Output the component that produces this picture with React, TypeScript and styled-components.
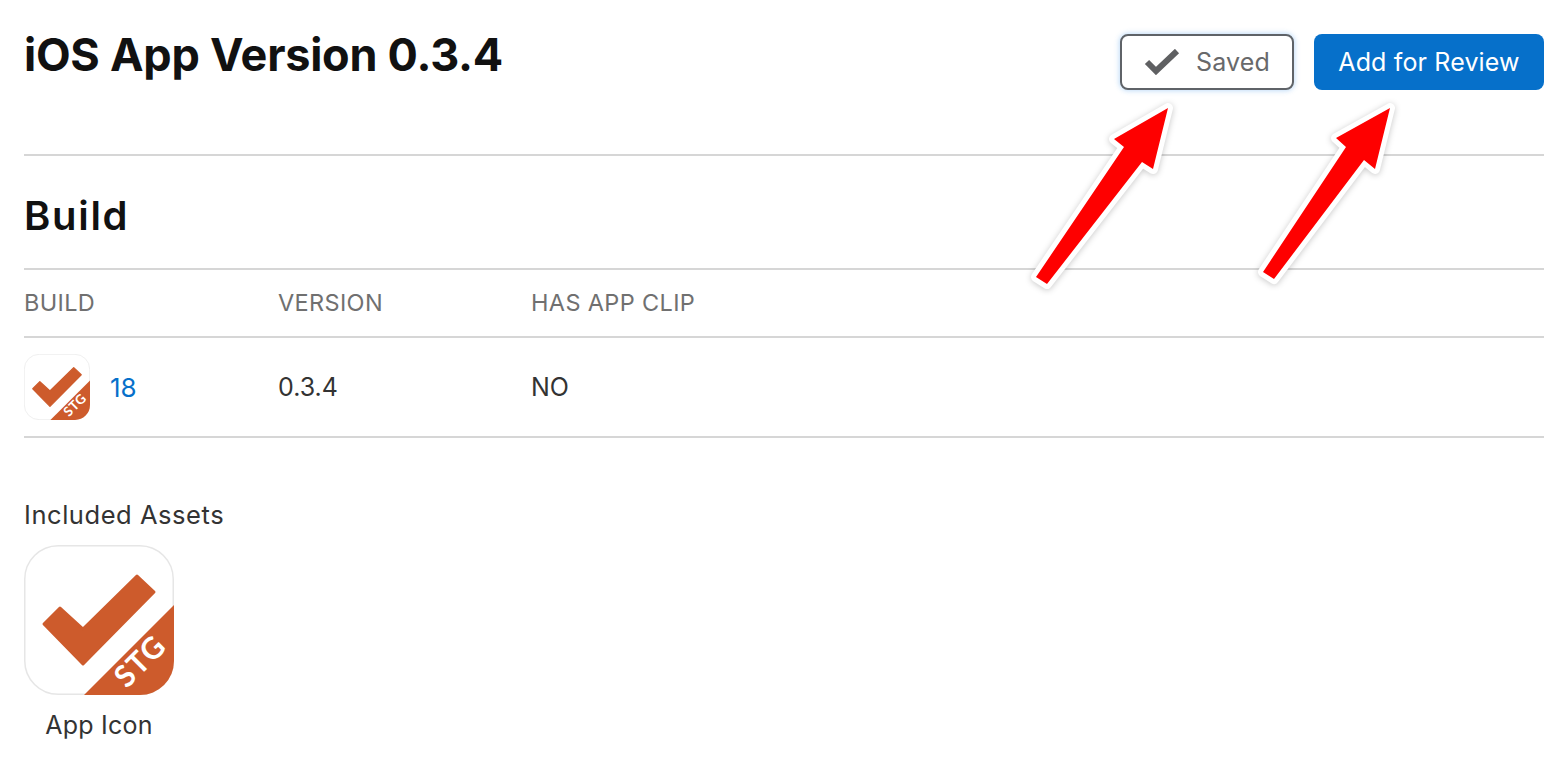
import React from "react";
import styled, { createGlobalStyle } from "styled-components";

const GlobalStyle = createGlobalStyle`
  html, body {
    margin: 0;
    padding: 0;
    background: #fff;
  }
  body {
    font-family: Inter, "Liberation Sans", sans-serif;
    color: #333;
  }
`;

const Page = styled.div`
  position: relative;
  width: 1564px;
  height: 770px;
  padding: 0 20px 0 24px;
  box-sizing: border-box;
  overflow: hidden;
`;

const Header = styled.header`
  display: flex;
  justify-content: space-between;
  align-items: flex-start;
  height: 120px;
  padding-top: 34px;
  border-bottom: 2px solid #d6d6d6;
`;

const Title = styled.h1`
  margin: -4px 0 0;
  font-size: 45px;
  line-height: 50px;
  font-weight: 650;
  letter-spacing: -0.25px;
  color: #111;
`;

const Actions = styled.div`
  display: flex;
  gap: 20px;
`;

const Button = styled.button<{ $primary?: boolean }>`
  display: flex;
  align-items: center;
  justify-content: center;
  height: 56px;
  width: ${(p) => (p.$primary ? "230px" : "174px")};
  gap: 16px;
  padding: 0;
  box-sizing: border-box;
  border-radius: 8px;
  font-family: inherit;
  font-size: 25px;
  letter-spacing: 0.15px;
  border: ${(p) => (p.$primary ? "none" : "2px solid #5f6368")};
  background: ${(p) => (p.$primary ? "#0670ca" : "#fff")};
  color: ${(p) => (p.$primary ? "#fff" : "#68696b")};
  box-shadow: ${(p) => (p.$primary ? "none" : "0 0 5px 1px rgba(120, 180, 240, 0.45)")};
`;

const SectionTitle = styled.h2`
  display: flex;
  align-items: center;
  height: 106px;
  margin: 0;
  padding-top: 6px;
  font-size: 40px;
  font-weight: 600;
  letter-spacing: 1.7px;
  color: #111;
  border-bottom: 2px solid #d6d6d6;
`;

const Row = styled.div<{ $height: number }>`
  display: grid;
  grid-template-columns: 254px 253px 1fr;
  align-items: center;
  height: ${(p) => p.$height}px;
  border-bottom: 2px solid #d6d6d6;
`;

const HeadCell = styled.div`
  margin-top: -1px;
  font-size: 23.5px;
  letter-spacing: 0.35px;
  color: #707070;
  text-transform: uppercase;
`;

const Cell = styled.div`
  display: flex;
  align-items: center;
  gap: 20px;
  font-size: 25px;
  color: #333;
`;

const BuildLink = styled.a`
  font-size: 26px;
  color: #0670ca;
  text-decoration: none;
`;

const AssetsLabel = styled.div`
  margin-top: 60px;
  font-size: 25.5px;
  line-height: 34px;
  letter-spacing: 0.55px;
  color: #333;
`;

const Asset = styled.figure`
  display: flex;
  flex-direction: column;
  align-items: center;
  gap: 13px;
  width: 150px;
  margin: 13px 0 0;
`;

const AssetCaption = styled.figcaption`
  font-size: 25px;
  line-height: 34px;
  letter-spacing: 0.25px;
  color: #333;
  white-space: nowrap;
`;

const Overlay = styled.svg`
  position: absolute;
  inset: 0;
  pointer-events: none;
  filter: drop-shadow(0 1px 3px rgba(0, 0, 0, 0.22));
`;

const Arrow = styled.polygon`
  fill: #fe0000;
  stroke: #fff;
  stroke-width: 10;
  stroke-linejoin: round;
  paint-order: stroke;
`;

const AppIcon = ({ size, id }: { size: number; id: string }) => (
  <svg width={size} height={size} viewBox="0 0 150 150" style={{ display: "block" }}>
    <defs>
      <clipPath id={id}>
        <rect x="0" y="0" width="150" height="150" rx="34" />
      </clipPath>
    </defs>
    <rect x="0.75" y="0.75" width="148.5" height="148.5" rx="33.5" fill="#fff" stroke="#e6e6e6" strokeWidth="1.5" />
    <g clipPath={`url(#${id})`}>
      <polygon points="150,60 150,150 60,150" fill="#cd5b2c" />
    </g>
    <polygon
      points="20,79 36,63 59,84 113,31 130,47 59,119"
      fill="#cd5b2c"
      stroke="#cd5b2c"
      strokeWidth="3"
      strokeLinejoin="round"
    />
    <text
      x="115"
      y="115"
      transform="rotate(-45 115 115)"
      textAnchor="middle"
      dominantBaseline="central"
      fontFamily="Lato, 'Open Sans', sans-serif"
      fontSize="30"
      fontWeight="700"
      letterSpacing="1"
      fill="#fff"
    >
      STG
    </text>
  </svg>
);

export default function App() {
  return (
    <Page>
      <GlobalStyle />
      <Header>
        <Title>iOS App Version 0.3.4</Title>
        <Actions>
          <Button>
            <svg width="36" height="26" viewBox="0 0 36 26">
              <polyline points="3,13 12,22 33,2" fill="none" stroke="#5f6062" strokeWidth="6" />
            </svg>
            Saved
          </Button>
          <Button $primary>Add for Review</Button>
        </Actions>
      </Header>
      <SectionTitle>Build</SectionTitle>
      <Row $height={66}>
        <HeadCell>Build</HeadCell>
        <HeadCell>Version</HeadCell>
        <HeadCell>Has App Clip</HeadCell>
      </Row>
      <Row $height={98}>
        <Cell>
          <AppIcon size={66} id="icon-small" />
          <BuildLink href="#">18</BuildLink>
        </Cell>
        <Cell>0.3.4</Cell>
        <Cell>NO</Cell>
      </Row>
      <AssetsLabel>Included Assets</AssetsLabel>
      <Asset>
        <AppIcon size={150} id="icon-large" />
        <AssetCaption>App Icon</AssetCaption>
      </Asset>
      <Overlay width="1564" height="770" viewBox="0 0 1564 770">
        <Arrow points="1168,108 1114,139 1124,147 1036,277 1047,284 1142,162 1153,169" />
        <Arrow points="1390,108 1336,138 1346,147 1263,272 1274,279 1364,160 1375,169" />
      </Overlay>
    </Page>
  );
}
